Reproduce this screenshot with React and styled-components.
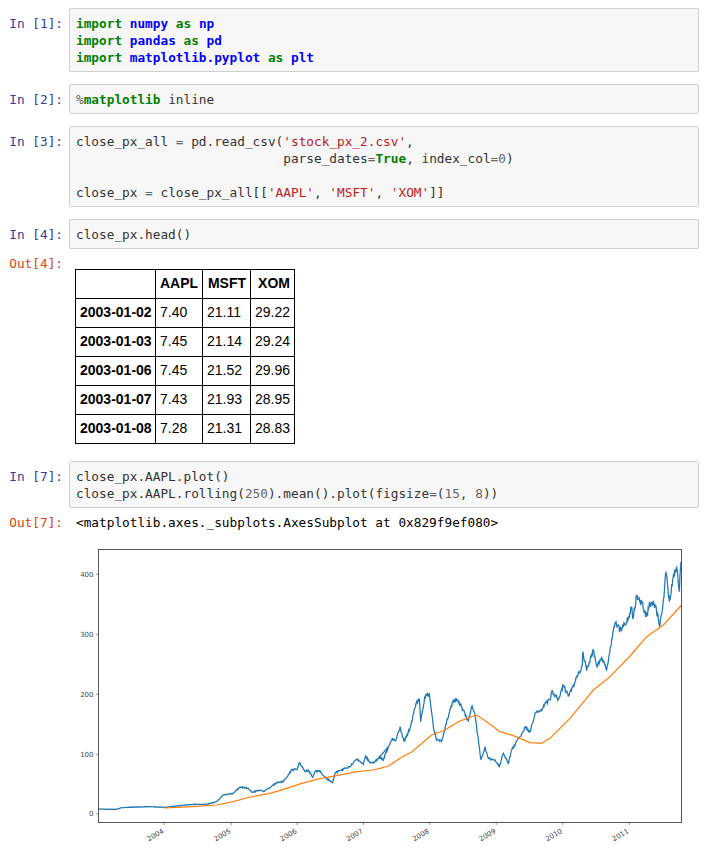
import styled, { createGlobalStyle } from 'styled-components';

const rows = [
  ['2003-01-02', '7.40', '21.11', '29.22'],
  ['2003-01-03', '7.45', '21.14', '29.24'],
  ['2003-01-06', '7.45', '21.52', '29.96'],
  ['2003-01-07', '7.43', '21.93', '28.95'],
  ['2003-01-08', '7.28', '21.31', '28.83'],
];

// anchors read off the plot, in page pixels
const fromLeft = (pts) => pts.map(([x, y]) => [60 + x / 3, 540 + y / 3]);
const fromRight = (pts) => pts.map(([x, y]) => [380 + x / 3, 540 + y / 3]);

const blueAnchors = [
  ...fromLeft([[115,807],[170,808],[185,803],[225,801],[270,800],[315,802],[350,798],[400,793],[440,793],[470,785],[490,765],[520,760],[540,741],[565,745],[575,757],[600,750],[610,755],[630,742],[650,728],[670,725],[695,690],[712,688],[718,668],[735,695],[745,690],[758,712],[765,695],[778,692],[795,712],[818,728],[826,698],[850,688],[870,680],[890,657],[910,673],[917,648],[930,668],[945,665],[958,650],[970,660],[985,620]]),
  ...fromRight([[0,650],[10,660],[25,620],[35,600],[48,600],[60,562],[72,605],[90,565],[108,490],[118,478],[122,545],[135,470],[148,462],[160,560],[170,600],[185,605],[200,545],[218,485],[232,480],[250,510],[265,545],[275,500],[285,525],[295,600],[303,660],[315,622],[325,655],[345,660],[358,680],[370,640],[385,670],[395,630],[420,590],[435,562],[450,575],[465,520],[485,512],[495,490],[510,480],[515,455],[535,478],[550,435],[565,470],[585,425],[607,375],[608,335],[620,392],[640,330],[650,378],[665,350],[680,390],[695,300],[705,250],[720,270],[745,238],[755,200],[758,235],[770,170],[785,190],[800,230],[810,190],[825,195],[840,255],[850,180],[858,98],[868,185],[878,120],[890,80],[898,155],[903,65]]),
];

const orangeAnchors = [
  ...fromLeft([[313,804],[400,800],[470,795],[520,785],[570,771],[630,760],[680,745],[725,730],[780,716],[830,707],[890,695],[940,690]]),
  ...fromRight([[0,685],[25,678],[65,652],[95,636],[155,585],[195,570],[235,545],[290,525],[320,545],[360,575],[400,587],[450,608],[485,610],[510,595],[570,535],[640,450],[690,410],[750,348],[800,290],[850,255],[905,195]]),
];

function toPoints(pts) {
  return pts.map(([x, y]) => `${x.toFixed(2)},${y.toFixed(2)}`).join(' ');
}

// daily wiggle on top of the anchors, bigger where the price is higher
function jitter(pts) {
  let seed = 4711;
  const rand = () => {
    seed = (seed * 16807) % 2147483647;
    return seed / 2147483647 - 0.5;
  };
  const out = [];
  for (let i = 0; i < pts.length - 1; i++) {
    const [x0, y0] = pts[i];
    const [x1, y1] = pts[i + 1];
    const steps = Math.max(1, Math.round((x1 - x0) / 0.5));
    for (let s = 0; s < steps; s++) {
      const t = s / steps;
      const y = y0 + (y1 - y0) * t;
      const amp = 0.2 + ((815 - y) / 240) * 8;
      out.push([x0 + (x1 - x0) * t, y + (s === 0 ? 0 : rand() * amp)]);
    }
  }
  out.push(pts[pts.length - 1]);
  return out;
}

const yTicks = [
  { label: '400', y: 574.3 },
  { label: '300', y: 634.3 },
  { label: '200', y: 694.3 },
  { label: '100', y: 754.3 },
  { label: '0', y: 813.8 },
];
const xTicks = [
  { label: '2004', x: 164.3 },
  { label: '2005', x: 231.3 },
  { label: '2006', x: 297.3 },
  { label: '2007', x: 363.5 },
  { label: '2008', x: 429.7 },
  { label: '2009', x: 496.3 },
  { label: '2010', x: 562.7 },
  { label: '2011', x: 629.3 },
];

function Chart() {
  return (
    <ChartSvg width="624" height="313" viewBox="75 540 624 313">
      <Lines>
        <polyline points={toPoints(jitter(blueAnchors))} fill="none" stroke="#1f77b4" strokeWidth="1.25" />
        <polyline points={toPoints(orangeAnchors)} fill="none" stroke="#ff7f0e" strokeWidth="1.2" strokeLinejoin="round" />
      </Lines>
      <rect x="98.5" y="549.5" width="583" height="273" fill="none" stroke="#555" strokeWidth="1" />
      {yTicks.map((t) => (
        <g key={t.label}>
          <line x1="96" x2="98" y1={t.y} y2={t.y} stroke="#666" strokeWidth="0.7" />
          <TickText x="93.5" y={t.y + 2.6} textAnchor="end">{t.label}</TickText>
        </g>
      ))}
      {xTicks.map((t) => (
        <g key={t.label}>
          <line x1={t.x} x2={t.x} y1="823" y2="825" stroke="#666" strokeWidth="0.7" />
          <TickText x={t.x - 1.5} y="833" textAnchor="end" transform={`rotate(-30 ${t.x - 1.5} 830)`}>{t.label}</TickText>
        </g>
      ))}
    </ChartSvg>
  );
}

export default function App() {
  return (
    <Notebook>
      <GlobalStyle />
      <Cell>
        <Prompt>In [1]:</Prompt>
        <InputBox>
          <Kw>import</Kw> <Ns>numpy</Ns> <Kw>as</Kw> <Ns>np</Ns>{'\n'}
          <Kw>import</Kw> <Ns>pandas</Ns> <Kw>as</Kw> <Ns>pd</Ns>{'\n'}
          <Kw>import</Kw> <Ns>matplotlib.pyplot</Ns> <Kw>as</Kw> <Ns>plt</Ns>
        </InputBox>
      </Cell>
      <Cell>
        <Prompt>In [2]:</Prompt>
        <InputBox>
          <Num>%</Num><Kw>matplotlib</Kw> inline
        </InputBox>
      </Cell>
      <Cell>
        <Prompt>In [3]:</Prompt>
        <InputBox>
          close_px_all <Num>=</Num> pd.read_csv(<Str>'stock_px_2.csv'</Str>,{'\n'}
          {'                           '}parse_dates<Num>=</Num><Kw>True</Kw>, index_col<Num>=0</Num>){'\n'}
          {'\n'}
          close_px <Num>=</Num> close_px_all[[<Str>'AAPL'</Str>, <Str>'MSFT'</Str>, <Str>'XOM'</Str>]]
        </InputBox>
      </Cell>
      <Cell>
        <Prompt>In [4]:</Prompt>
        <InputBox>close_px.head()</InputBox>
      </Cell>
      <Output>
        <Prompt $out>Out[4]:</Prompt>
        <OutputBody>
          <DataFrame>
            <colgroup>
              <col width="80" />
              <col width="47" />
              <col width="48" />
              <col width="44" />
            </colgroup>
            <thead>
              <tr>
                <HeadCell />
                <HeadCell>AAPL</HeadCell>
                <HeadCell>MSFT</HeadCell>
                <HeadCell>XOM</HeadCell>
              </tr>
            </thead>
            <tbody>
              {rows.map(([date, a, m, x]) => (
                <tr key={date}>
                  <DateCell>{date}</DateCell>
                  <ValueCell>{a}</ValueCell>
                  <ValueCell>{m}</ValueCell>
                  <ValueCell>{x}</ValueCell>
                </tr>
              ))}
            </tbody>
          </DataFrame>
        </OutputBody>
      </Output>
      <Cell>
        <Prompt>In [7]:</Prompt>
        <InputBox>
          close_px.AAPL.plot(){'\n'}
          close_px.AAPL.rolling(<Num>250</Num>).mean().plot(figsize<Num>=</Num>(<Num>15</Num>, <Num>8</Num>))
        </InputBox>
      </Cell>
      <Output $last>
        <Prompt $out>Out[7]:</Prompt>
        <OutputBody>
          <OutputText>&lt;matplotlib.axes._subplots.AxesSubplot at 0x829f9ef080&gt;</OutputText>
          <Chart />
        </OutputBody>
      </Output>
    </Notebook>
  );
}

const mono = `"DejaVu Sans Mono", "Liberation Mono", monospace`;

const GlobalStyle = createGlobalStyle`
  html, body {
    margin: 0;
    padding: 0;
    background: #fff;
  }
`;
const Notebook = styled.div`
  padding-top: 8px;
  width: 709px;
  overflow: hidden;
`;
const Cell = styled.div`
  display: grid;
  grid-template-columns: 63px 630px;
  column-gap: 6px;
  margin-bottom: 12px;
`;
const Output = styled.div`
  display: grid;
  grid-template-columns: 63px 630px;
  column-gap: 6px;
  margin-top: -6px;
  margin-bottom: ${(p) => (p.$last ? 0 : 17)}px;
`;
const Prompt = styled.div`
  font-family: ${mono};
  font-size: 12.75px;
  line-height: 17px;
  padding-top: ${(p) => (p.$out ? 0 : 7)}px;
  text-align: right;
  white-space: pre;
  color: ${(p) => (p.$out ? '#d84315' : '#303f9f')};
`;
const InputBox = styled.pre`
  margin: 0;
  padding: 6px 6px 5px;
  font-family: ${mono};
  font-size: 12.75px;
  line-height: 17px;
  color: #333;
  background: #f7f7f7;
  border: 1px solid #cfcfcf;
  border-radius: 2px;
`;
const Kw = styled.span`
  color: #008000;
  font-weight: bold;
`;
const Ns = styled.span`
  color: #0000ff;
  font-weight: bold;
`;
const Str = styled.span`
  color: #ba2121;
`;
const Num = styled.span`
  color: #666;
`;
const OutputBody = styled.div`
  margin-left: 6px;
`;
const OutputText = styled.pre`
  margin: 0 0 0 1px;
  font-family: ${mono};
  font-size: 12.75px;
  line-height: 17px;
  color: #000;
`;
const DataFrame = styled.table`
  margin-top: 14px;
  border-collapse: collapse;
  table-layout: fixed;
  width: 219px;
  font-family: "Liberation Sans", Arial, sans-serif;
  font-size: 14px;
  color: #000;
  white-space: nowrap;
`;
const HeadCell = styled.th`
  height: 29px;
  padding: 0 4px 2px;
  box-sizing: border-box;
  text-align: right;
  font-weight: bold;
  border: 1px solid #000;
`;
const DateCell = styled.th`
  height: 29px;
  padding: 0 4px 2px;
  box-sizing: border-box;
  text-align: left;
  font-weight: bold;
  border: 1px solid #000;
`;
const ValueCell = styled.td`
  height: 29px;
  padding: 0 4px 2px;
  box-sizing: border-box;
  text-align: left;
  border: 1px solid #000;
`;
const ChartSvg = styled.svg`
  display: block;
  margin-top: 9px;
`;
const Lines = styled.g`
  filter: blur(0.35px);
`;
const TickText = styled.text`
  font-family: "DejaVu Sans", sans-serif;
  font-size: 7px;
  fill: #444;
`;
